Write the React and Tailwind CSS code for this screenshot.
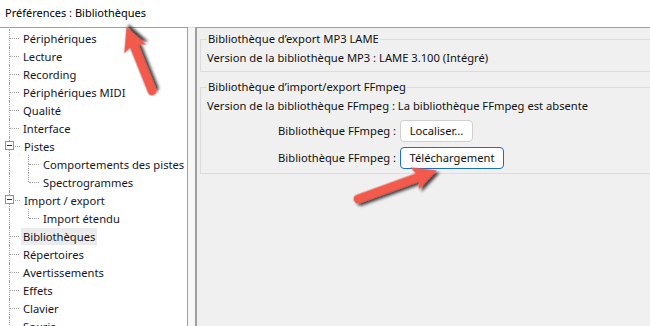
const font = { fontFamily: '"Segoe UI", "Noto Sans", sans-serif' };

const tree = [
  { label: 'Périphériques', kind: 'leaf' },
  { label: 'Lecture', kind: 'leaf' },
  { label: 'Recording', kind: 'leaf' },
  { label: 'Périphériques MIDI', kind: 'leaf' },
  { label: 'Qualité', kind: 'leaf' },
  { label: 'Interface', kind: 'leaf' },
  { label: 'Pistes', kind: 'parent' },
  { label: 'Comportements des pistes', kind: 'child' },
  { label: 'Spectrogrammes', kind: 'lastchild' },
  { label: 'Import / export', kind: 'parent' },
  { label: 'Import étendu', kind: 'lastchild' },
  { label: 'Bibliothèques', kind: 'leaf', selected: true },
  { label: 'Répertoires', kind: 'leaf' },
  { label: 'Avertissements', kind: 'leaf' },
  { label: 'Effets', kind: 'leaf' },
  { label: 'Clavier', kind: 'leaf' },
  { label: 'Souris', kind: 'leaf' },
];

const RootLine = () => (
  <div className="w-[10px] h-full border-r border-dotted border-[#a0a0a0] shrink-0" />
);

const Dash = ({ w = 'w-[9px]' }) => (
  <div className={`${w} border-t border-dotted border-[#a0a0a0] shrink-0`} />
);

function TreeRow({ item }) {
  let connector;
  if (item.kind === 'parent') {
    connector = (
      <div className="flex items-center shrink-0">
        <div className="flex flex-col h-[18px] w-[15px]">
          <div className="w-[10px] h-[4px] border-r border-dotted border-[#a0a0a0]" />
          <div className="ml-[5px] w-[9px] h-[9px] border border-[#919191] bg-white flex items-center justify-center">
            <div className="w-[5px] h-px bg-[#333]" />
          </div>
          <div className="w-[10px] flex-1 border-r border-dotted border-[#a0a0a0]" />
        </div>
        <Dash w="w-[5px]" />
      </div>
    );
  } else if (item.kind === 'child' || item.kind === 'lastchild') {
    connector = (
      <div className="flex items-center h-full shrink-0">
        <RootLine />
        <div className="w-[9px] shrink-0" />
        <div className="flex flex-col h-full w-[10px] shrink-0">
          <div className="h-[9px] w-[10px] border-r border-dotted border-[#a0a0a0]" />
          <div
            className={`flex-1 w-[10px] ${item.kind === 'child' ? 'border-r border-dotted border-[#a0a0a0]' : ''}`}
          />
        </div>
        <Dash w="w-[10px]" />
      </div>
    );
  } else {
    connector = (
      <div className="flex items-center h-full shrink-0">
        <RootLine />
        <Dash />
      </div>
    );
  }
  return (
    <div className="flex items-center h-[18px]">
      {connector}
      <span
        className={`ml-[2px] px-[2px] leading-[17px] text-[#15151f] whitespace-nowrap ${
          item.selected ? 'bg-[#ebebeb]' : ''
        }`}
      >
        {item.label}
      </span>
    </div>
  );
}

function Arrow({ x, y, angle, length }) {
  const L = length;
  return (
    <g transform={`translate(${x} ${y}) rotate(${angle})`} filter="url(#shadow)">
      <line x1="0" y1="0" x2={L - 16} y2="0" stroke="#f25a4c" strokeWidth="9" strokeLinecap="round" />
      <path d={`M ${L} 0 L ${L - 24} -12 L ${L - 19} 0 L ${L - 24} 12 Z`} fill="#f25a4c" />
    </g>
  );
}

export default function App() {
  return (
    <div className="relative w-[650px] h-[326px] overflow-hidden bg-[#f0f0f0] text-[11.2px]" style={font}>
      <div className="h-[27px] bg-white flex items-center pl-[5px] text-black text-[11px]">
        Préférences : Bibliothèques
      </div>
      <div className="flex h-[299px]">
        <div className="w-[188px] shrink-0 bg-white border-t border-r border-[#a0a0a0] pt-px overflow-hidden">
          {tree.map((item) => (
            <TreeRow key={item.label} item={item} />
          ))}
        </div>
        <div className="w-[7px] shrink-0 bg-[#f7f7f7] border-t border-[#e0e0e0]" />
        <div className="w-[520px] shrink-0 border-t border-l-2 border-[#a0a0a0] pl-[3px] pt-[3px] text-[#111]">
          <fieldset className="border border-[#dcdcdc] pl-[6px] pb-[5px]">
            <legend className="px-[1px] leading-[16px]">Bibliothèque d’export MP3 LAME</legend>
            <div className="leading-[16px] pt-[3px]">Version de la bibliothèque MP3 : LAME 3.100 (Intégré)</div>
          </fieldset>
          <fieldset className="mt-[7px] border border-[#dcdcdc] pl-[6px] pb-[4px]">
            <legend className="px-[1px] leading-[16px]">Bibliothèque d’import/export FFmpeg</legend>
            <div className="leading-[16px] pt-[3px]">
              Version de la bibliothèque FFmpeg : La bibliothèque FFmpeg est absente
            </div>
            <div className="flex items-center mt-[6px]">
              <div className="w-[193px] text-right pr-[4px]">Bibliothèque FFmpeg :</div>
              <button className="h-[22px] w-[73px] rounded-[4px] border border-[#d0d0d0] bg-[#fdfdfd] leading-none">
                Localiser...
              </button>
            </div>
            <div className="flex items-center mt-[5px]">
              <div className="w-[193px] text-right pr-[4px]">Bibliothèque FFmpeg :</div>
              <button className="h-[22px] w-[104px] rounded-[4px] border border-[#1a6fc4] bg-[#fdfdfd] leading-none">
                Téléchargement
              </button>
            </div>
          </fieldset>
        </div>
      </div>
      <svg className="absolute inset-0 pointer-events-none" width="650" height="326">
        <defs>
          <filter id="shadow" x="-50%" y="-50%" width="200%" height="200%">
            <feDropShadow dx="2" dy="3" stdDeviation="1.8" floodColor="#000" floodOpacity="0.75" />
          </filter>
        </defs>
        <Arrow x={152} y={91} angle={-111.8} length={69} />
        <Arrow x={358} y={199} angle={-19.9} length={84} />
      </svg>
    </div>
  );
}
